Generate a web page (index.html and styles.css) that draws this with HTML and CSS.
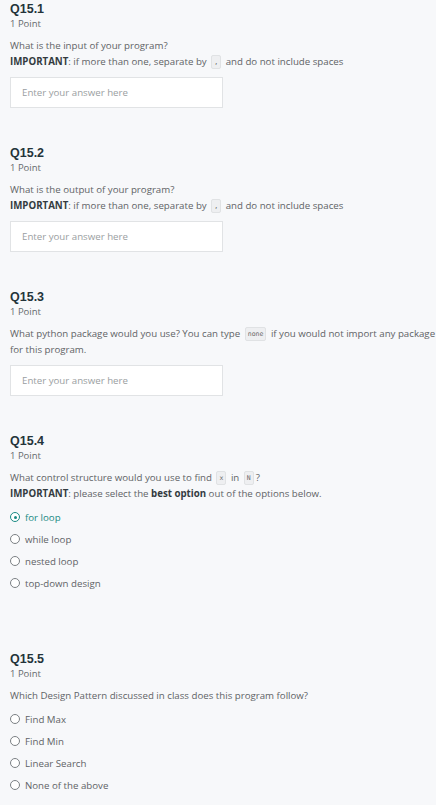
FILE: index.html
```html
<!DOCTYPE html>
<html lang="en">
<head>
<meta charset="utf-8">
<title>Questions</title>
<link rel="stylesheet" href="styles.css">
</head>
<body>
<main class="page">
  <section class="question">
    <h2 class="q-title">Q15.1</h2>
    <div class="points">1 Point</div>
    <div class="prompt">
      <p>What is the input of your program?</p>
      <p><strong>IMPORTANT</strong>: if more than one, separate by <code>,</code> and do not include spaces</p>
    </div>
    <input class="answer" type="text" placeholder="Enter your answer here">
  </section>

  <section class="question">
    <h2 class="q-title">Q15.2</h2>
    <div class="points">1 Point</div>
    <div class="prompt">
      <p>What is the output of your program?</p>
      <p><strong>IMPORTANT</strong>: if more than one, separate by <code>,</code> and do not include spaces</p>
    </div>
    <input class="answer" type="text" placeholder="Enter your answer here">
  </section>

  <section class="question">
    <h2 class="q-title">Q15.3</h2>
    <div class="points">1 Point</div>
    <div class="prompt">
      <p><span>What python package would you use? You can type </span><code>none</code><span> if you would not import any package</span> <span>for this program.</span></p>
    </div>
    <input class="answer" type="text" placeholder="Enter your answer here">
  </section>

  <section class="question">
    <h2 class="q-title">Q15.4</h2>
    <div class="points">1 Point</div>
    <div class="prompt">
      <p>What control structure would you use to find <code>x</code> in <code>N</code>?</p>
      <p><strong>IMPORTANT</strong>: please select the <strong>best option</strong> out of the options below.</p>
    </div>
    <ul class="options options-spaced">
      <li class="option selected"><span class="radio"></span>for loop</li>
      <li class="option"><span class="radio"></span>while loop</li>
      <li class="option"><span class="radio"></span>nested loop</li>
      <li class="option"><span class="radio"></span>top-down design</li>
    </ul>
  </section>

  <section class="question">
    <h2 class="q-title">Q15.5</h2>
    <div class="points">1 Point</div>
    <div class="prompt">
      <p>Which Design Pattern discussed in class does this program follow?</p>
    </div>
    <ul class="options">
      <li class="option"><span class="radio"></span>Find Max</li>
      <li class="option"><span class="radio"></span>Find Min</li>
      <li class="option"><span class="radio"></span>Linear Search</li>
      <li class="option"><span class="radio"></span>None of the above</li>
    </ul>
  </section>
</main>
</body>
</html>
```

FILE: styles.css
```css
html, body {
  margin: 0;
  padding: 0;
  overflow: hidden;
  background: #f7f8fa;
}

body {
  font-family: "Open Sans", "Liberation Sans", sans-serif;
  color: #5f6366;
}

.page {
  width: 436px;
  padding: 2px 10px 0 10px;
  display: flex;
  flex-direction: column;
  gap: 38px;
}

.question {
  display: flex;
  flex-direction: column;
}

.q-title {
  margin: 0;
  font-family: "Liberation Sans", Arial, sans-serif;
  font-size: 12.5px;
  line-height: 15.5px;
  font-weight: 700;
  color: #24343a;
}

.points {
  font-size: 9.5px;
  line-height: 12px;
  color: #666a6d;
}

.prompt {
  margin-top: 8.5px;
  font-size: 9.7px;
  line-height: 16px;
  color: #5f6366;
}

.prompt p {
  margin: 0;
}

.prompt strong {
  color: #333b3f;
  font-weight: 700;
}

code {
  display: inline-block;
  font-family: "DejaVu Sans Mono", monospace;
  font-size: 6.5px;
  line-height: 12px;
  padding: 0 2px;
  margin: 0 2px;
  background: #eeeff1;
  border: 1px solid #e0e2e4;
  border-radius: 2px;
  color: #666;
  vertical-align: middle;
}

.answer {
  margin-top: 7px;
  width: 213px;
  height: 31px;
  box-sizing: border-box;
  border: 1px solid #e1e3e5;
  background: #ffffff;
  padding: 0 11px;
  font-family: "Open Sans", "Liberation Sans", sans-serif;
  font-size: 9.7px;
  color: #555;
  outline: none;
}

.answer::placeholder {
  color: #9a9ea1;
}

.options {
  list-style: none;
  margin: 4px 0 0 0;
  padding: 0;
}

.options-spaced {
  margin-bottom: 20px;
}

.option {
  display: flex;
  align-items: center;
  gap: 5px;
  height: 22px;
  font-size: 9.7px;
  color: #5f6366;
}

.radio {
  width: 10px;
  height: 10px;
  box-sizing: border-box;
  border: 1.5px solid #7b8084;
  border-radius: 50%;
  background: #fff;
  display: flex;
  align-items: center;
  justify-content: center;
}

.option.selected {
  color: #1a8a84;
}

.option.selected .radio {
  border-color: #1a8a84;
}

.option.selected .radio::after {
  content: "";
  width: 3px;
  height: 3px;
  border-radius: 50%;
  background: #1a8a84;
}
```
